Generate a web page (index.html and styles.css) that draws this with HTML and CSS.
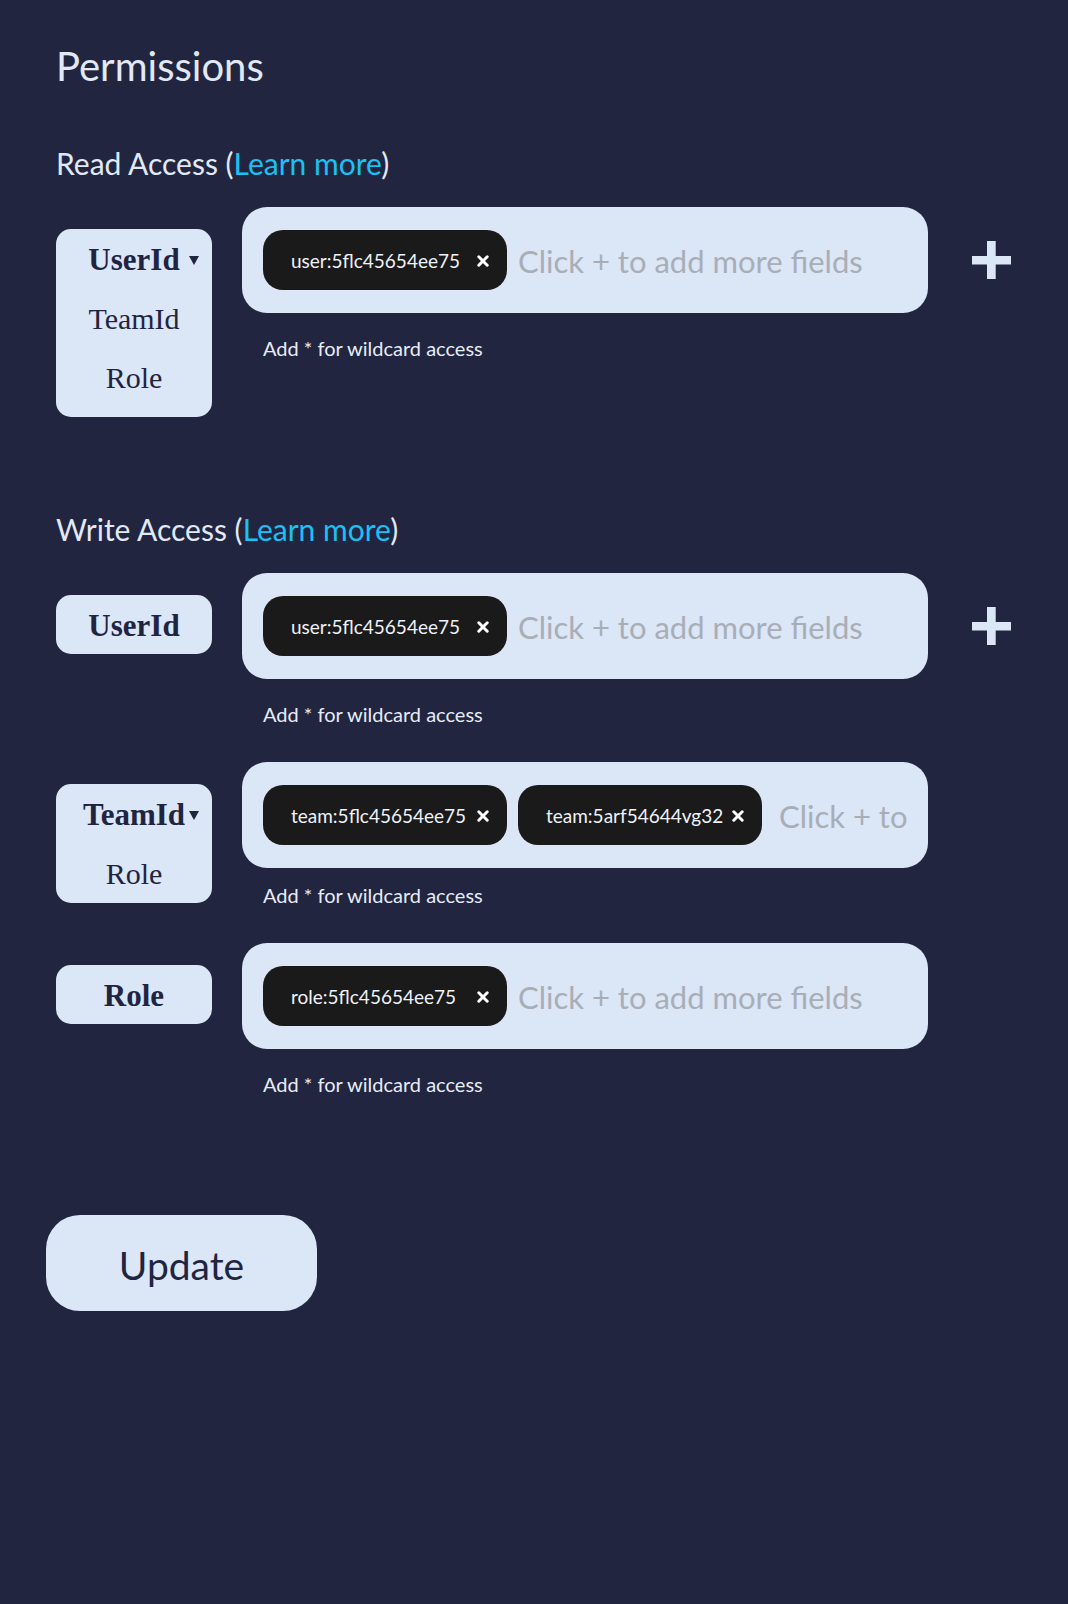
FILE: index.html
```html
<!DOCTYPE html>
<html lang="en">
<head>
<meta charset="utf-8">
<title>Permissions</title>
<link rel="stylesheet" href="styles.css">
</head>
<body>
<main class="page">
  <h1 class="title">Permissions</h1>

  <section class="access access--read">
    <h2 class="access-title">Read Access (<a class="learn" href="#">Learn more</a>)</h2>
    <div class="rows">
      <div class="perm-row">
        <div class="select select--3" role="listbox">
          <div class="opt opt--selected">UserId<span class="caret"></span></div>
          <div class="opt">TeamId</div>
          <div class="opt">Role</div>
        </div>
        <div class="field">
          <div class="tagbox">
            <span class="chip"><span class="chip-text">user:5flc45654ee75</span><svg class="chip-x" viewBox="0 0 12 12"><path d="M1.8 1.8L10.2 10.2M10.2 1.8L1.8 10.2"/></svg></span>
            <input class="tag-input" type="text" placeholder="Click + to add more fields">
          </div>
          <p class="hint">Add * for wildcard access</p>
        </div>
        <button class="add-btn" type="button" aria-label="Add field"><svg class="plus" viewBox="0 0 39 39"><rect x="0" y="15" width="39" height="8.5"/><rect x="15" y="0" width="8.7" height="38"/></svg></button>
      </div>
    </div>
  </section>

  <section class="access access--write">
    <h2 class="access-title">Write Access (<a class="learn" href="#">Learn more</a>)</h2>
    <div class="rows">
      <div class="perm-row">
        <div class="select select--1" role="listbox">
          <div class="opt opt--selected">UserId</div>
        </div>
        <div class="field">
          <div class="tagbox">
            <span class="chip"><span class="chip-text">user:5flc45654ee75</span><svg class="chip-x" viewBox="0 0 12 12"><path d="M1.8 1.8L10.2 10.2M10.2 1.8L1.8 10.2"/></svg></span>
            <input class="tag-input" type="text" placeholder="Click + to add more fields">
          </div>
          <p class="hint">Add * for wildcard access</p>
        </div>
        <button class="add-btn" type="button" aria-label="Add field"><svg class="plus" viewBox="0 0 39 39"><rect x="0" y="15" width="39" height="8.5"/><rect x="15" y="0" width="8.7" height="38"/></svg></button>
      </div>

      <div class="perm-row">
        <div class="select select--2" role="listbox">
          <div class="opt opt--selected">TeamId<span class="caret"></span></div>
          <div class="opt">Role</div>
        </div>
        <div class="field">
          <div class="tagbox">
            <span class="chip"><span class="chip-text">team:5flc45654ee75</span><svg class="chip-x" viewBox="0 0 12 12"><path d="M1.8 1.8L10.2 10.2M10.2 1.8L1.8 10.2"/></svg></span>
            <span class="chip"><span class="chip-text">team:5arf54644vg32</span><svg class="chip-x" viewBox="0 0 12 12"><path d="M1.8 1.8L10.2 10.2M10.2 1.8L1.8 10.2"/></svg></span>
            <input class="tag-input tag-input--shift" type="text" placeholder="Click + to add more fields">
          </div>
          <p class="hint hint--tight">Add * for wildcard access</p>
        </div>
      </div>

      <div class="perm-row">
        <div class="select select--1" role="listbox">
          <div class="opt opt--selected">Role</div>
        </div>
        <div class="field">
          <div class="tagbox">
            <span class="chip"><span class="chip-text">role:5flc45654ee75</span><svg class="chip-x" viewBox="0 0 12 12"><path d="M1.8 1.8L10.2 10.2M10.2 1.8L1.8 10.2"/></svg></span>
            <input class="tag-input" type="text" placeholder="Click + to add more fields">
          </div>
          <p class="hint">Add * for wildcard access</p>
        </div>
      </div>
    </div>
  </section>

  <button class="update" type="button">Update</button>
</main>
</body>
</html>
```
FILE: styles.css
```css
html {
  background: #212540;
}

body {
  margin: 0;
  background: #212540;
  font-family: Lato, "Open Sans", sans-serif;
  color: #dfe7f5;
}

.page {
  padding: 42px 0 80px 56px;
}

.title {
  margin: 0;
  font-size: 40px;
  line-height: 48px;
  font-weight: 400;
  color: #e2e9f6;
}

.access-title {
  margin: 55px 0 0;
  font-size: 30px;
  line-height: 36px;
  font-weight: 400;
  color: #e2e9f6;
}

.access--write .access-title {
  margin-top: 94px;
}

.learn {
  color: #1cc0f2;
  text-decoration: none;
}

.rows {
  display: flex;
  flex-direction: column;
  gap: 36px;
  margin-top: 26px;
}

.perm-row {
  display: flex;
  align-items: flex-start;
}

.select {
  width: 156px;
  box-sizing: border-box;
  margin-top: 22px;
  padding: 3px 0 0;
  background: #dbe6f7;
  border-radius: 15px;
  color: #1f2541;
  font-family: "Liberation Serif", "Times New Roman", serif;
  display: flex;
  flex-direction: column;
  gap: 3px;
}

.select--3 {
  padding-bottom: 11px;
}

.select--2 {
  padding-bottom: 1px;
}

.opt {
  position: relative;
  height: 56px;
  line-height: 56px;
  text-align: center;
  font-size: 30px;
}

.opt--selected {
  font-weight: 700;
  font-size: 31px;
}

.caret {
  position: absolute;
  right: 13px;
  top: 24px;
  width: 0;
  height: 0;
  border-left: 5px solid transparent;
  border-right: 5px solid transparent;
  border-top: 9px solid #1f2541;
}

.field {
  width: 686px;
  margin-left: 30px;
}

.tagbox {
  height: 106px;
  box-sizing: border-box;
  padding: 23px 21px;
  background: #dbe6f7;
  border-radius: 25px;
  display: flex;
  align-items: center;
  gap: 11px;
  overflow: hidden;
}

.chip {
  flex: none;
  width: 244px;
  height: 60px;
  box-sizing: border-box;
  padding: 1px 18px 0 28px;
  border-radius: 20px;
  background: #1a1a1a;
  color: #eef2f8;
  display: flex;
  align-items: center;
  justify-content: space-between;
  font-size: 19px;
  white-space: nowrap;
}

.chip-x {
  width: 12px;
  height: 12px;
  flex: none;
  fill: none;
  stroke: #ffffff;
  stroke-width: 3;
  stroke-linecap: round;
}

.tag-input {
  flex: 1;
  min-width: 0;
  height: 38px;
  border: none;
  background: transparent;
  padding: 2px 0 0;
  margin: 0;
  font-family: inherit;
  font-size: 31px;
  line-height: 36px;
  color: #1f2541;
  outline: none;
}

.tag-input::placeholder {
  color: #a9aeb6;
  opacity: 1;
}

.tag-input--shift {
  padding-left: 6px;
}

.hint {
  margin: 23px 0 0;
  padding-left: 21px;
  font-size: 20px;
  line-height: 24px;
  color: #e6ecf7;
}

.hint--tight {
  margin-top: 15px;
}

.add-btn {
  margin-left: 44px;
  width: 39px;
  height: 106px;
  padding: 0;
  border: none;
  background: transparent;
  display: flex;
  align-items: center;
  justify-content: center;
  cursor: pointer;
}

.plus {
  width: 39px;
  height: 39px;
  fill: #dbe6f7;
}

.update {
  display: block;
  margin: 119px 0 0 -10px;
  width: 271px;
  height: 96px;
  padding: 4px 0 0;
  border: none;
  border-radius: 34px;
  background: #dbe6f7;
  color: #1f2541;
  font-family: Lato, "Open Sans", sans-serif;
  font-size: 39px;
  cursor: pointer;
}
```
